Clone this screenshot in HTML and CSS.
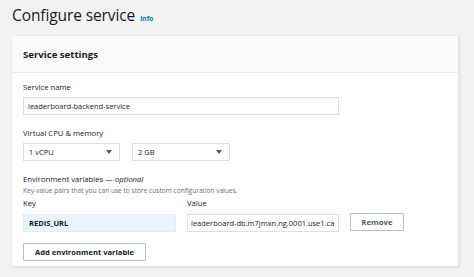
FILE: index.html
```html
<!DOCTYPE html>
<html lang="en">
<head>
  <meta charset="UTF-8">
  <title>Configure service</title>
  <link rel="stylesheet" href="styles.css">
</head>
<body>
  <div class="page-title">
    <h1>Configure service</h1>
    <a class="info-link" href="#">Info</a>
  </div>

  <div class="panel">
    <div class="panel-header">
      <h2>Service settings</h2>
    </div>

    <div class="panel-body">
      <div class="field field-name">
        <label class="field-label" for="serviceName">Service name</label>
        <input id="serviceName" class="input input-wide" type="text" value="leaderboard-backend-service">
      </div>

      <div class="field field-cpu">
        <label class="field-label">Virtual CPU &amp; memory</label>
        <div class="select-row">
          <div class="select">
            <span>1 vCPU</span>
            <span class="caret"></span>
          </div>
          <div class="select">
            <span>2 GB</span>
            <span class="caret"></span>
          </div>
        </div>
      </div>

      <div class="field field-env">
        <label class="field-label">Environment variables — <em>optional</em></label>
        <p class="field-desc">Key-value pairs that you can use to store custom configuration values.</p>
        <div class="env-grid">
          <span class="env-head">Key</span>
          <span class="env-head">Value</span>
          <span></span>
          <input class="input input-key" type="text" value="REDIS_URL">
          <input class="input input-value" type="text" value="leaderboard-db.m7jmxn.ng.0001.use1.cache.amazonaws.com">
          <button class="btn btn-remove">Remove</button>
        </div>
        <button class="btn btn-add">Add environment variable</button>
      </div>
    </div>
  </div>
</body>
</html>
```

FILE: styles.css
```css
* {
  margin: 0;
  padding: 0;
  box-sizing: border-box;
}

body {
  width: 474px;
  height: 277px;
  font-family: "Open Sans", "Noto Sans", sans-serif;
  background: #f2f2f2;
  color: #16191f;
  overflow: hidden;
}

.page-title {
  display: flex;
  align-items: baseline;
  gap: 5px;
  height: 36px;
  padding: 4px 12px 0;
}

.page-title h1 {
  font-size: 15.5px;
  font-weight: 400;
  letter-spacing: -0.1px;
}

.info-link {
  font-size: 6.5px;
  font-weight: 700;
  color: #0073bb;
  text-decoration: none;
}

.panel {
  margin-left: 12px;
  width: 448px;
  height: 232px;
  background: #fff;
  border-right: 2px solid #e4e4e4;
  border-bottom: 2px solid #e4e4e4;
  box-shadow: 0 0 1px rgba(0, 0, 0, 0.15);
}

.panel-header {
  height: 37px;
  padding: 0 11px;
  display: flex;
  align-items: center;
  background: #fafafa;
  border-bottom: 1px solid #eaeded;
}

.panel-header h2 {
  font-size: 9.6px;
  font-weight: 700;
}

.panel-body {
  padding: 8px 11px 0;
}

.field-label {
  display: block;
  font-size: 7.7px;
  line-height: 13px;
}

.field-label em {
  font-style: italic;
}

.field-name .field-label,
.field-cpu .field-label {
  margin-bottom: 3px;
}

.field-cpu {
  margin-top: 12px;
}

.field-env {
  margin-top: 12px;
}

.input,
.select {
  display: flex;
  align-items: center;
  height: 18px;
  border: 1px solid #dcdfe0;
  background: #fff;
  font-family: inherit;
  font-size: 7.5px;
  color: #16191f;
  padding: 0 4px;
  white-space: nowrap;
  overflow: hidden;
  outline: none;
  border-radius: 0;
}

.input-wide {
  width: 316px;
}

.select-row {
  display: flex;
  gap: 12px;
}

.select {
  width: 97px;
  justify-content: space-between;
  padding: 0 7px 0 5px;
}

.select:last-child {
  width: 98px;
}

.caret {
  width: 0;
  height: 0;
  border-left: 3px solid transparent;
  border-right: 3px solid transparent;
  border-top: 4px solid #545b64;
}

.field-desc {
  font-size: 6.6px;
  line-height: 10px;
  color: #687078;
}

.env-grid {
  display: grid;
  grid-template-columns: 153px 152px 54px;
  column-gap: 11px;
  align-items: center;
}

.env-head {
  font-size: 7.7px;
  line-height: 13px;
  margin: 1px 0 4px;
  align-self: start;
}

.input-key {
  width: 153px;
  background: #eaf4fc;
  border-color: #e2edf6;
  font-weight: 700;
  padding-left: 5px;
}

.input-value {
  width: 152px;
  padding-left: 3px;
}

.btn {
  height: 18px;
  background: #fff;
  border: 1px solid #b9c0c2;
  font-family: inherit;
  font-size: 7.8px;
  font-weight: 700;
  color: #545b64;
  border-radius: 1px;
}

.btn-remove {
  margin-top: -3px;
  width: 54px;
}

.btn-add {
  margin-top: 11px;
  width: 123px;
  color: #16191f;
  font-size: 7.6px;
}
```
